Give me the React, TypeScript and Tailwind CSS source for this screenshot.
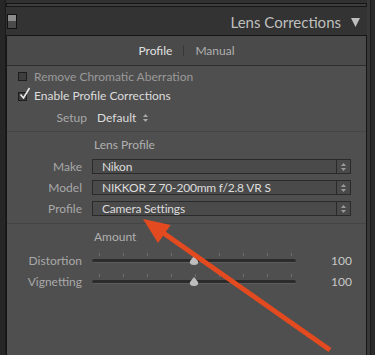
import React from 'react';

const font = { fontFamily: 'Lato, "Open Sans", sans-serif' };

function UpDown({ className = '' }: { className?: string }) {
  return (
    <svg width="7" height="10" viewBox="0 0 7 10" className={className}>
      <path d="M3.5 1 L6 4 L1 4 Z" fill="currentColor" />
      <path d="M3.5 9 L6 6 L1 6 Z" fill="currentColor" />
    </svg>
  );
}

function SelectRow({ label, value }: { label: string; value: string }) {
  return (
    <div className="flex items-center h-[15px] mb-[6px]">
      <div className="w-[75px] text-right text-[12px] text-[#a9a9a9] leading-none">{label}</div>
      <div className="ml-[10px] flex-1 mr-[15px] h-[15px] flex border border-[#2a2a2a] bg-[#4a4a4a]">
        <div className="flex-1 pl-[9px] text-[12px] leading-[13px] text-[#dcdcdc] tracking-[-0.2px]">{value}</div>
        <div className="w-[14px] border-l border-[#2a2a2a] flex items-center justify-center text-[#9a9a9a]">
          <UpDown />
        </div>
      </div>
    </div>
  );
}

function Slider({ label }: { label: string }) {
  const ticks = [0, 1, 2, 3, 4, 5, 6, 7, 8];
  return (
    <div className="flex items-center h-[21px]">
      <div className="w-[75px] text-right text-[12px] text-[#a9a9a9] leading-none">{label}</div>
      <div className="ml-[10px] w-[204px] relative h-[21px]">
        <div className="absolute left-[7px] top-[3px] flex gap-[23px]">
          {ticks.map((t) => (
            <div key={t} className="w-px h-[3px] bg-[#6e6e6e]" />
          ))}
        </div>
        <div className="absolute left-0 right-0 top-[9px] h-[4px] rounded-full bg-[#2b2b2b] border-b border-[#5c5c5c]" />
        <svg width="10" height="9" viewBox="0 0 10 9" className="absolute left-[97px] top-[6px]">
          <path d="M5 0 L9 5 Q10 9 5 9 Q0 9 1 5 Z" fill="#bdbdbd" />
        </svg>
      </div>
      <div className="flex-1 text-right pr-[14px] text-[12px] text-[#c8c8c8] leading-none">100</div>
    </div>
  );
}

export default function App() {
  return (
    <div className="relative w-[375px] h-[355px] overflow-hidden bg-[#2c2c2c] flex" style={font}>
      {/* left gutter */}
      <div className="w-[6px] bg-[#262626] border-r border-[#1a1a1a]" />

      <div className="w-[361px] flex flex-col bg-[#333333]">
        {/* previous panel edge */}
        <div className="h-[3px] bg-[#313131]" />
        <div className="h-[4px] border border-[#151515] bg-[#3d3d3d]" />

        {/* header */}
        <div className="h-[28px] flex items-center relative">
          <div className="absolute left-[1px] top-[7px] w-[10px] h-[15px] border border-[#111] flex flex-col">
            <div className="h-[6px] bg-[#8c8c8c]" />
            <div className="flex-1 bg-[#4a4a4a]" />
          </div>
          <div className="flex-1 text-right text-[15px] text-[#bfbfbf] leading-none pr-[26px] pt-[2px]">Lens Corrections</div>
          <svg width="9" height="9" viewBox="0 0 9 9" className="absolute right-[7px] top-[11px]">
            <path d="M0 0 L9 0 L4.5 9 Z" fill="#bdbdbd" />
          </svg>
        </div>

        {/* content panel */}
        <div className="flex-1 border border-[#161616] border-b-0 bg-[#4f4f4f] flex flex-col">
          <div className="h-[30px] bg-[#4a4a4a] border-b border-[#2e2e2e] flex items-center justify-center text-[12px]">
            <span className="text-[#e0e0e0] mr-[11px]">Profile</span>
            <span className="w-px h-[11px] bg-[#383838]" />
            <span className="text-[#b0b0b0] ml-[11px]">Manual</span>
          </div>

          <div className="pt-[1px] pl-[11px]">
            <div className="flex items-center h-[19px]">
              <div className="w-[9px] h-[9px] border border-[#1e1e1e] bg-[#3e3e3e]" />
              <span className="ml-[7px] text-[12px] text-[#9a9a9a] leading-none">Remove Chromatic Aberration</span>
            </div>
            <div className="flex items-center h-[19px] relative">
              <div className="w-[9px] h-[9px] border border-[#1e1e1e] bg-[#3e3e3e] mt-[2px]" />
              <svg width="12" height="13" viewBox="0 0 12 13" className="absolute left-[1px] top-[1px]">
                <path d="M1.5 7.5 L4.5 11 L10.5 1" stroke="#eaeaea" strokeWidth="1.6" fill="none" />
              </svg>
              <span className="ml-[7px] text-[12px] text-[#dcdcdc] leading-none">Enable Profile Corrections</span>
            </div>
          </div>

          <div className="h-[26px] flex items-center">
            <div className="w-[80px] text-right text-[12px] text-[#a9a9a9] leading-none">Setup</div>
            <div className="ml-[10px] text-[12px] text-[#dcdcdc] leading-none">Default</div>
            <UpDown className="ml-[6px] text-[#a9a9a9]" />
          </div>

          <div className="border-t border-[#444444]" />

          <div className="pt-[3px]">
            <div className="pl-[87px] h-[20px] text-[12px] text-[#b0b0b0] leading-[20px]">Lens Profile</div>
            <div className="pt-[4px]">
              <SelectRow label="Make" value="Nikon" />
              <SelectRow label="Model" value="NIKKOR Z 70-200mm f/2.8 VR S" />
              <SelectRow label="Profile" value="Camera Settings" />
            </div>
          </div>

          <div className="border-t border-[#444444] mt-[1px]" />

          <div className="pt-[4px]">
            <div className="pl-[87px] h-[18px] text-[12px] text-[#b0b0b0] leading-[18px]">Amount</div>
            <div className="pt-[4px]">
              <Slider label="Distortion" />
              <Slider label="Vignetting" />
            </div>
          </div>
        </div>
      </div>

      {/* right gutter */}
      <div className="flex-1 flex">
        <div className="w-[3px] bg-[#383838]" />
        <div className="w-px bg-[#1a1a1a]" />
        <div className="flex-1 bg-[#2a2a2a]" />
      </div>

      {/* annotation arrow */}
      <svg width="375" height="355" className="absolute inset-0 pointer-events-none">
        <line x1="330" y1="350" x2="162" y2="232" stroke="#e34a1f" strokeWidth="5" />
        <polygon points="143,219 170.6,224.9 158,242.9" fill="#e34a1f" />
      </svg>
    </div>
  );
}
